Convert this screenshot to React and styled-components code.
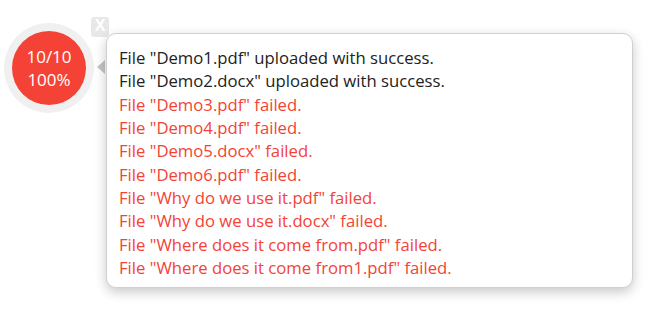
import React from "react";
import styled, { createGlobalStyle } from "styled-components";

const Global = createGlobalStyle`
  html, body { margin: 0; padding: 0; background: #fff; }
  body { font-family: "Open Sans", "Noto Sans", sans-serif; }
`;

const Page = styled.div`
  display: flex;
  align-items: flex-start;
  padding: 23px 0 0 4px;
  position: relative;
  width: 664px;
  height: 317px;
  box-sizing: border-box;
`;

const Ring = styled.div`
  width: 90px;
  height: 90px;
  border-radius: 50%;
  background: #f0f0f0;
  display: flex;
  align-items: center;
  justify-content: center;
  flex-shrink: 0;
`;

const Badge = styled.div`
  width: 74px;
  height: 74px;
  border-radius: 50%;
  background: #f44336;
  color: #fff;
  display: flex;
  flex-direction: column;
  align-items: center;
  justify-content: center;
  font-size: 17px;
  line-height: 23px;
`;

const PopupWrap = styled.div`
  position: relative;
  margin: 10px 0 0 12px;
`;

const CloseButton = styled.div`
  position: absolute;
  left: -15px;
  top: -16px;
  width: 18px;
  height: 20px;
  border-radius: 3px;
  background: #e8e8e8;
  color: #fff;
  font-family: "Liberation Sans", Arial, sans-serif;
  font-weight: bold;
  font-size: 16px;
  line-height: 18px;
  text-align: center;
`;

const Arrow = styled.div`
  position: absolute;
  left: -9px;
  top: 27px;
  width: 0;
  height: 0;
  border-top: 7px solid transparent;
  border-bottom: 7px solid transparent;
  border-right: 8px solid #c4c4c4;
`;

const Panel = styled.div`
  position: relative;
  width: 527px;
  height: 255px;
  box-sizing: border-box;
  background: #fff;
  border: 1px solid #d0d0d0;
  border-radius: 10px;
  box-shadow: 0 4px 12px rgba(0, 0, 0, 0.22);
  padding: 12px 12px 0 12px;
`;

const Line = styled.div`
  font-size: 16.7px;
  line-height: 23.33px;
  color: ${(p) => (p.$failed ? "#f44336" : "#222")};
  white-space: nowrap;
`;

const items = [
  ['File "Demo1.pdf" uploaded with success.', false],
  ['File "Demo2.docx" uploaded with success.', false],
  ['File "Demo3.pdf" failed.', true],
  ['File "Demo4.pdf" failed.', true],
  ['File "Demo5.docx" failed.', true],
  ['File "Demo6.pdf" failed.', true],
  ['File "Why do we use it.pdf" failed.', true],
  ['File "Why do we use it.docx" failed.', true],
  ['File "Where does it come from.pdf" failed.', true],
  ['File "Where does it come from1.pdf" failed.', true],
];

export default function App() {
  return (
    <>
      <Global />
      <Page>
        <Ring>
          <Badge>
            <span>10/10</span>
            <span>100%</span>
          </Badge>
        </Ring>
        <PopupWrap>
          <CloseButton>X</CloseButton>
          <Arrow />
          <Panel>
            {items.map(([t, f], i) => (
              <Line key={i} $failed={f}>
                {t}
              </Line>
            ))}
          </Panel>
        </PopupWrap>
      </Page>
    </>
  );
}
